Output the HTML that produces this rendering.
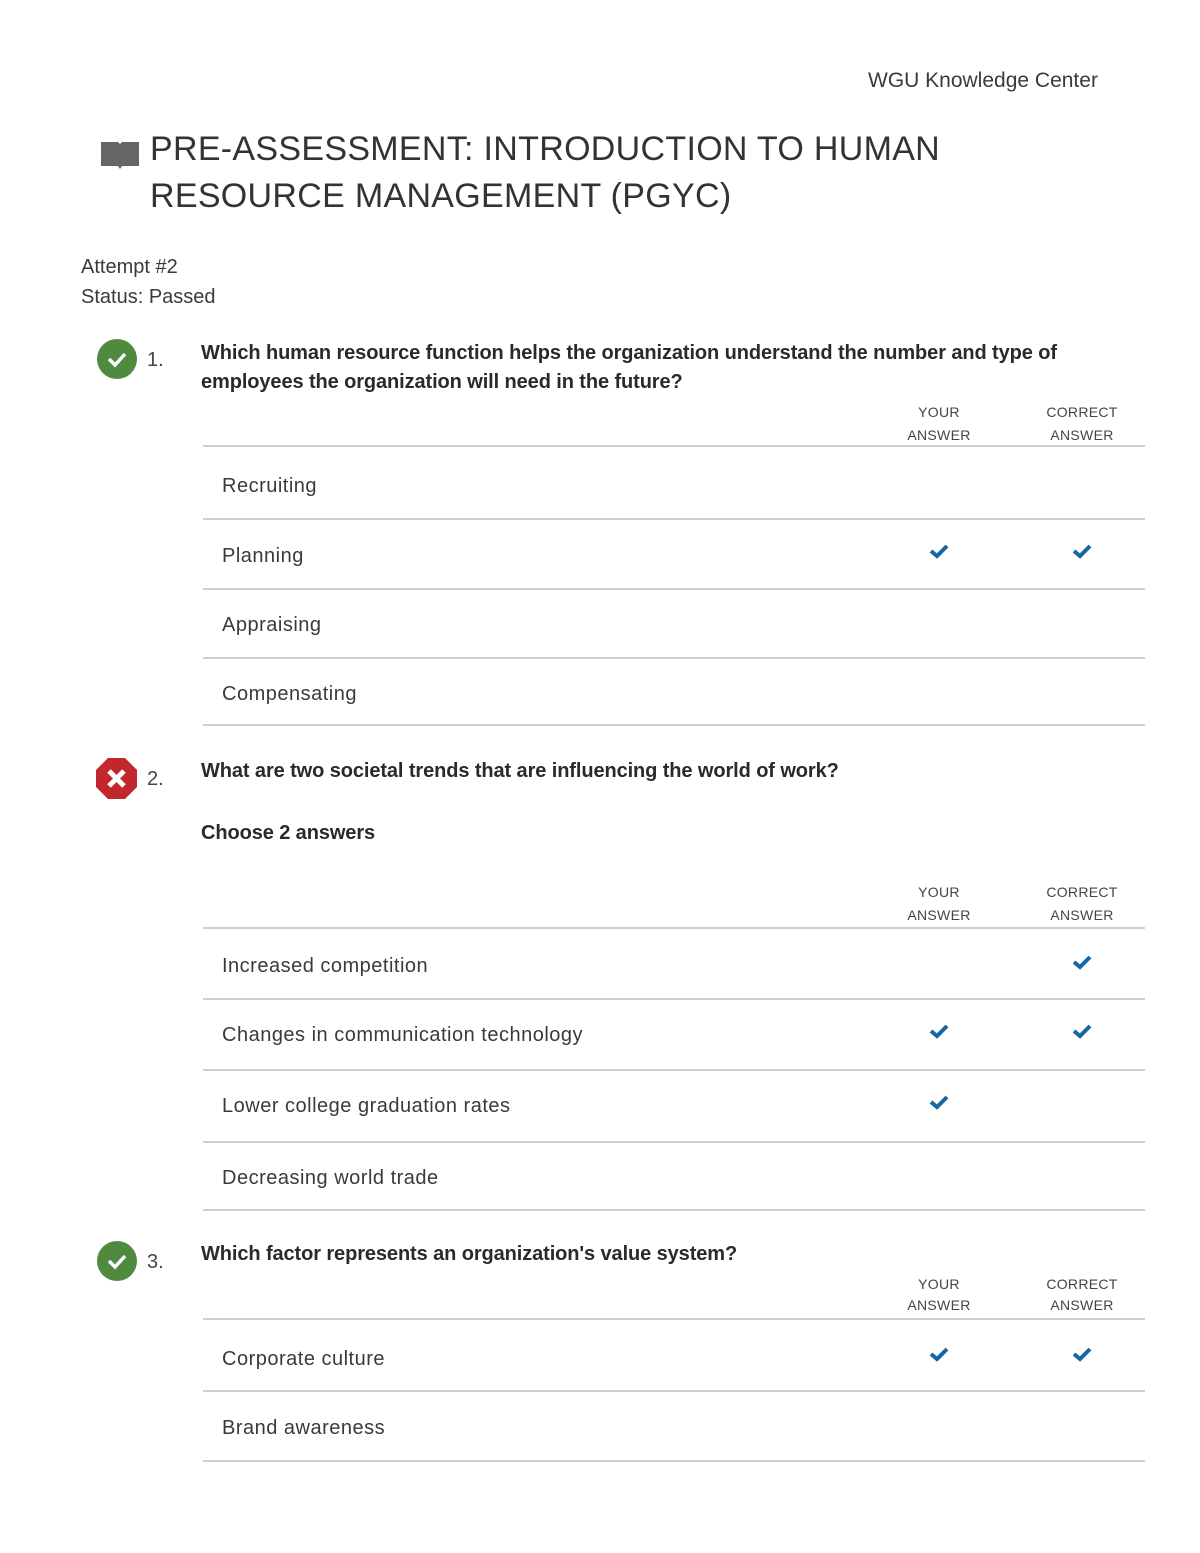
<!DOCTYPE html>
<html><head><meta charset="utf-8"><style>
body{margin:0;background:#fff;width:1200px;height:1553px;position:relative;overflow:hidden;font-family:"Liberation Sans",sans-serif;color:#333}
.t{position:absolute;white-space:nowrap;line-height:1}
.r{font-size:20px;left:222px;color:#3a3a3a;letter-spacing:0.5px}
.q{font-size:20px;font-weight:bold;left:201px;color:#2a2a2a;letter-spacing:-0.1px}
.h{font-size:14px;color:#444;width:120px;text-align:center;letter-spacing:0.3px}
.n{font-size:20px;left:147px;color:#444}
.l{position:absolute;left:203px;width:942px;height:2px;background:#cfcfcf}
.c{position:absolute;width:20px;height:16px}
</style></head><body>
<div class="t" style="left:868px;top:70px;font-size:21px;color:#3a3a3a">WGU Knowledge Center</div>
<svg style="position:absolute;left:101px;top:140px" width="38" height="29"><path d="M0 2 L17 2 L19 4 L21 2 L38 2 L38 26 L21 26 L19 29 L17 26 L0 26Z" fill="#666"/></svg>
<div class="t" style="left:150px;top:132px;font-size:34px;color:#333;letter-spacing:0.3px">PRE-ASSESSMENT: INTRODUCTION TO HUMAN</div>
<div class="t" style="left:150px;top:179px;font-size:34px;color:#333;letter-spacing:0.3px">RESOURCE MANAGEMENT (PGYC)</div>
<div class="t" style="left:81px;top:257px;font-size:20px;color:#3a3a3a">Attempt #2</div>
<div class="t" style="left:81px;top:287px;font-size:20px;color:#3a3a3a">Status: Passed</div>

<svg style="position:absolute;left:97px;top:339px" width="40" height="40"><circle cx="20" cy="20" r="20" fill="#4f8a3f"/><path d="M12 20 L18 26 L28 15" stroke="#fff" stroke-width="3.5" fill="none"/></svg>
<div class="t n" style="top:350px">1.</div>
<div class="t q" style="top:343px">Which human resource function helps the organization understand the number and type of</div>
<div class="t q" style="top:372px">employees the organization will need in the future?</div>
<div class="t h" style="left:879px;top:405px">YOUR</div><div class="t h" style="left:879px;top:428px">ANSWER</div>
<div class="t h" style="left:1022px;top:405px">CORRECT</div><div class="t h" style="left:1022px;top:428px">ANSWER</div>
<div class="l" style="top:445px"></div><div class="l" style="top:518px"></div><div class="l" style="top:588px"></div><div class="l" style="top:657px"></div><div class="l" style="top:724px"></div>
<div class="t r" style="top:476px">Recruiting</div>
<div class="t r" style="top:546px">Planning</div>
<div class="t r" style="top:615px">Appraising</div>
<div class="t r" style="top:684px">Compensating</div>

<svg style="position:absolute;left:96px;top:758px" width="41" height="41"><path d="M12 0 L29 0 L41 12 L41 29 L29 41 L12 41 L0 29 L0 12Z" fill="#c1272d"/><path d="M13 13 L28 28 M28 13 L13 28" stroke="#fff" stroke-width="5"/></svg>
<div class="t n" style="top:769px">2.</div>
<div class="t q" style="top:761px">What are two societal trends that are influencing the world of work?</div>
<div class="t q" style="top:823px">Choose 2 answers</div>
<div class="t h" style="left:879px;top:885px">YOUR</div><div class="t h" style="left:879px;top:908px">ANSWER</div>
<div class="t h" style="left:1022px;top:885px">CORRECT</div><div class="t h" style="left:1022px;top:908px">ANSWER</div>
<div class="l" style="top:927px"></div><div class="l" style="top:998px"></div><div class="l" style="top:1069px"></div><div class="l" style="top:1141px"></div><div class="l" style="top:1209px"></div>
<div class="t r" style="top:956px">Increased competition</div>
<div class="t r" style="top:1025px">Changes in communication technology</div>
<div class="t r" style="top:1096px">Lower college graduation rates</div>
<div class="t r" style="top:1168px">Decreasing world trade</div>

<svg style="position:absolute;left:97px;top:1241px" width="40" height="40"><circle cx="20" cy="20" r="20" fill="#4f8a3f"/><path d="M12 20 L18 26 L28 15" stroke="#fff" stroke-width="3.5" fill="none"/></svg>
<div class="t n" style="top:1252px">3.</div>
<div class="t q" style="top:1244px">Which factor represents an organization's value system?</div>
<div class="t h" style="left:879px;top:1277px">YOUR</div><div class="t h" style="left:879px;top:1298px">ANSWER</div>
<div class="t h" style="left:1022px;top:1277px">CORRECT</div><div class="t h" style="left:1022px;top:1298px">ANSWER</div>
<div class="l" style="top:1318px"></div><div class="l" style="top:1390px"></div><div class="l" style="top:1460px"></div>
<div class="t r" style="top:1349px">Corporate culture</div>
<div class="t r" style="top:1418px">Brand awareness</div>

<svg class="c" style="left:929px;top:543px" viewBox="0 0 20 16"><path d="M2 8 L8 13 L18 3" stroke="#1767a5" stroke-width="4" fill="none"/></svg>
<svg class="c" style="left:1072px;top:543px" viewBox="0 0 20 16"><path d="M2 8 L8 13 L18 3" stroke="#1767a5" stroke-width="4" fill="none"/></svg>
<svg class="c" style="left:1072px;top:954px" viewBox="0 0 20 16"><path d="M2 8 L8 13 L18 3" stroke="#1767a5" stroke-width="4" fill="none"/></svg>
<svg class="c" style="left:929px;top:1023px" viewBox="0 0 20 16"><path d="M2 8 L8 13 L18 3" stroke="#1767a5" stroke-width="4" fill="none"/></svg>
<svg class="c" style="left:1072px;top:1023px" viewBox="0 0 20 16"><path d="M2 8 L8 13 L18 3" stroke="#1767a5" stroke-width="4" fill="none"/></svg>
<svg class="c" style="left:929px;top:1094px" viewBox="0 0 20 16"><path d="M2 8 L8 13 L18 3" stroke="#1767a5" stroke-width="4" fill="none"/></svg>
<svg class="c" style="left:929px;top:1346px" viewBox="0 0 20 16"><path d="M2 8 L8 13 L18 3" stroke="#1767a5" stroke-width="4" fill="none"/></svg>
<svg class="c" style="left:1072px;top:1346px" viewBox="0 0 20 16"><path d="M2 8 L8 13 L18 3" stroke="#1767a5" stroke-width="4" fill="none"/></svg>
</body></html>
